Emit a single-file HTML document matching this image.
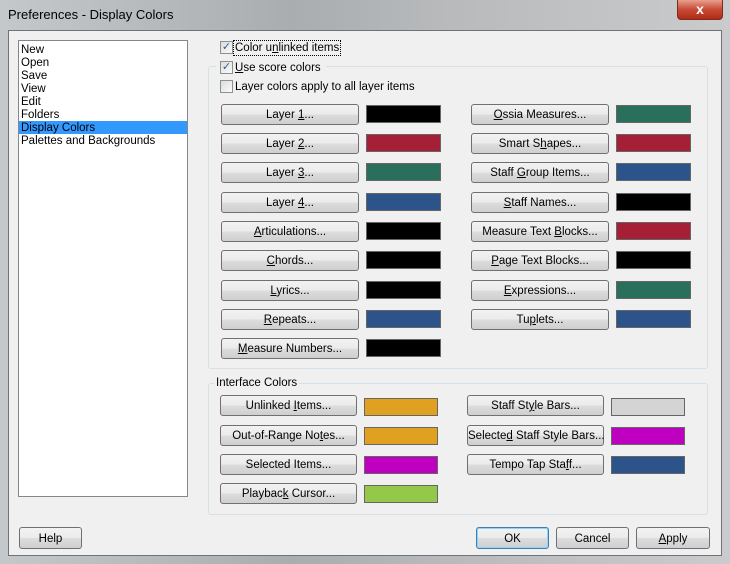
<!DOCTYPE html><html><head><style>
*{margin:0;padding:0;box-sizing:border-box}
body{width:730px;height:564px;overflow:hidden;font:11px "Liberation Sans",sans-serif;color:#000;position:relative;background:linear-gradient(90deg,#c5c8ca,#a9adb0 40%,#b7b9bb 60%,#c9cbcc)}
.a{position:absolute}
#client{left:8px;top:30px;width:714px;height:526px;background:#f0f0f0;border:1px solid #6f7276}
.list{left:18px;top:40px;width:170px;height:457px;background:#fff;border:1px solid #828790;padding-top:2px;font-size:11.5px}
.list div{height:13px;line-height:14px;padding-left:2px;white-space:nowrap}
.sel{background:#3399ff}
.btn{height:21px;border:1px solid #707070;border-radius:3px;background:linear-gradient(#f2f2f2,#ebebeb 50%,#dddddd 50%,#cfcfcf);text-align:center;line-height:21px;white-space:nowrap;font-size:11.5px}
.sw{width:75px;height:18px;border:1px solid #666}
.grp{border:1px solid #d5dfe5;border-radius:3px}
.cb{width:13px;height:13px;border:1px solid #8e8f8f;background:linear-gradient(135deg,#dcdcdc,#fbfbfb);font-size:11px;line-height:11px;text-align:center;color:#3a5a92}
.lb{font-size:11.5px}
u{text-decoration:underline}
</style></head><body>
<div class="a" style="left:8px;top:7px;font-size:13px;color:#000">Preferences - Display Colors</div>
<div class="a" style="left:677px;top:0;width:46px;height:20px;background:linear-gradient(#e8a090,#c84a34 50%,#b02a15);border:1px solid #7a2c20;border-top:none;border-radius:0 0 4px 4px;color:#fff;text-align:center;font-weight:bold;font-size:14px;line-height:18px">x</div>
<div class="a" id="client"></div>
<div class="a list">
<div>New</div><div>Open</div><div>Save</div><div>View</div><div>Edit</div><div>Folders</div><div class="sel">Display Colors</div><div>Palettes and Backgrounds</div></div>

<div class="a grp" style="left:208px;top:66px;width:500px;height:303px"></div>
<div class="a grp" style="left:208px;top:383px;width:500px;height:132px"></div>

<div class="a cb" style="left:220px;top:41px">✓</div>
<div class="a lb" style="left:233px;top:40px;border:1px dotted #000;padding:0 1px;line-height:14px">Color u<u>n</u>linked items</div>
<div class="a" style="left:216px;top:60px;width:110px;height:14px;background:#f0f0f0"></div>
<div class="a cb" style="left:220px;top:61px">✓</div>
<div class="a lb" style="left:235px;top:62px"><u>U</u>se score colors</div>
<div class="a cb" style="left:220px;top:80px"></div>
<div class="a lb" style="left:235px;top:81px">Layer colors apply to all layer items</div>
<div class="a lb" style="left:214px;top:377px;background:#f0f0f0;padding:0 2px">Interface Colors</div>

<div class="a btn" style="left:221px;top:104px;width:138px">Layer <u>1</u>...</div><div class="a sw" style="left:366px;top:105px;background:#000"></div>
<div class="a btn" style="left:221px;top:133px;width:138px">Layer <u>2</u>...</div><div class="a sw" style="left:366px;top:134px;background:#a52037"></div>
<div class="a btn" style="left:221px;top:162px;width:138px">Layer <u>3</u>...</div><div class="a sw" style="left:366px;top:163px;background:#2a6e5c"></div>
<div class="a btn" style="left:221px;top:192px;width:138px">Layer <u>4</u>...</div><div class="a sw" style="left:366px;top:193px;background:#2d548a"></div>
<div class="a btn" style="left:221px;top:221px;width:138px"><u>A</u>rticulations...</div><div class="a sw" style="left:366px;top:222px;background:#000"></div>
<div class="a btn" style="left:221px;top:250px;width:138px"><u>C</u>hords...</div><div class="a sw" style="left:366px;top:251px;background:#000"></div>
<div class="a btn" style="left:221px;top:280px;width:138px"><u>L</u>yrics...</div><div class="a sw" style="left:366px;top:281px;background:#000"></div>
<div class="a btn" style="left:221px;top:309px;width:138px"><u>R</u>epeats...</div><div class="a sw" style="left:366px;top:310px;background:#2d548a"></div>
<div class="a btn" style="left:221px;top:338px;width:138px"><u>M</u>easure Numbers...</div><div class="a sw" style="left:366px;top:339px;background:#000"></div>

<div class="a btn" style="left:471px;top:104px;width:138px"><u>O</u>ssia Measures...</div><div class="a sw" style="left:616px;top:105px;background:#2a6e5c"></div>
<div class="a btn" style="left:471px;top:133px;width:138px">Smart S<u>h</u>apes...</div><div class="a sw" style="left:616px;top:134px;background:#a52037"></div>
<div class="a btn" style="left:471px;top:162px;width:138px">Staff <u>G</u>roup Items...</div><div class="a sw" style="left:616px;top:163px;background:#2d548a"></div>
<div class="a btn" style="left:471px;top:192px;width:138px"><u>S</u>taff Names...</div><div class="a sw" style="left:616px;top:193px;background:#000"></div>
<div class="a btn" style="left:471px;top:221px;width:138px">Measure Text <u>B</u>locks...</div><div class="a sw" style="left:616px;top:222px;background:#a52037"></div>
<div class="a btn" style="left:471px;top:250px;width:138px"><u>P</u>age Text Blocks...</div><div class="a sw" style="left:616px;top:251px;background:#000"></div>
<div class="a btn" style="left:471px;top:280px;width:138px"><u>E</u>xpressions...</div><div class="a sw" style="left:616px;top:281px;background:#2a6e5c"></div>
<div class="a btn" style="left:471px;top:309px;width:138px">Tu<u>p</u>lets...</div><div class="a sw" style="left:616px;top:310px;background:#2d548a"></div>

<div class="a btn" style="left:220px;top:395px;width:137px">Unlinked <u>I</u>tems...</div><div class="a sw" style="left:364px;top:398px;background:#e0a020;width:74px"></div>
<div class="a btn" style="left:220px;top:425px;width:137px">Out-of-Range No<u>t</u>es...</div><div class="a sw" style="left:364px;top:427px;background:#e0a020;width:74px"></div>
<div class="a btn" style="left:220px;top:454px;width:137px">Selected Items...</div><div class="a sw" style="left:364px;top:456px;background:#c000c0;width:74px"></div>
<div class="a btn" style="left:220px;top:483px;width:137px">Playbac<u>k</u> Cursor...</div><div class="a sw" style="left:364px;top:485px;background:#94c84a;width:74px"></div>

<div class="a btn" style="left:467px;top:395px;width:137px">Staff St<u>y</u>le Bars...</div><div class="a sw" style="left:611px;top:398px;background:#d4d4d4;width:74px"></div>
<div class="a btn" style="left:467px;top:425px;width:137px">Selecte<u>d</u> Staff Style Bars...</div><div class="a sw" style="left:611px;top:427px;background:#c000c0;width:74px"></div>
<div class="a btn" style="left:467px;top:454px;width:137px">Tempo Tap Sta<u>f</u>f...</div><div class="a sw" style="left:611px;top:456px;background:#2d548a;width:74px"></div>

<div class="a btn" style="left:19px;top:527px;width:63px;height:22px;line-height:22px">Help</div>
<div class="a btn" style="left:476px;top:527px;width:73px;height:22px;line-height:22px;border-color:#3c7fb1;box-shadow:inset 0 0 0 1px #8ed4f5">OK</div>
<div class="a btn" style="left:556px;top:527px;width:73px;height:22px;line-height:22px">Cancel</div>
<div class="a btn" style="left:636px;top:527px;width:74px;height:22px;line-height:22px"><u>A</u>pply</div>
</body></html>
